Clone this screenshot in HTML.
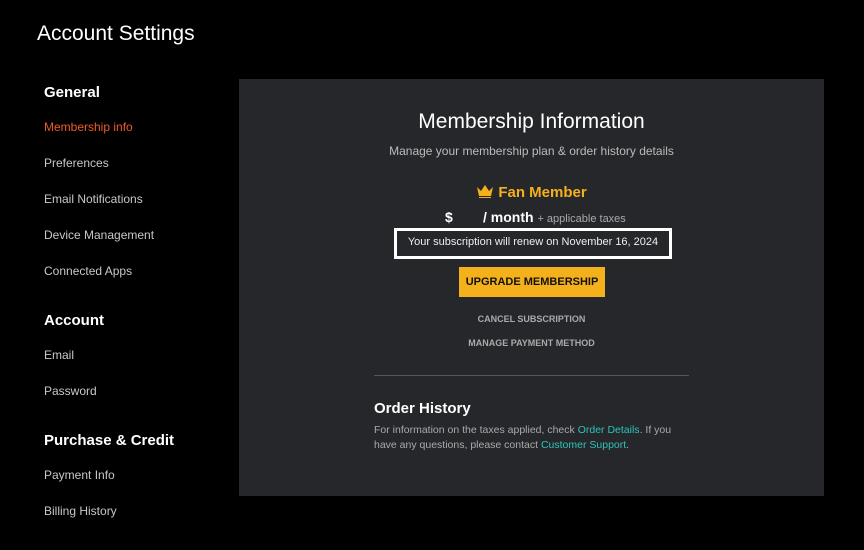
<!DOCTYPE html>
<html><head><meta charset="utf-8"><style>
*{margin:0;padding:0;box-sizing:border-box}
body{width:864px;height:550px;background:#000;font-family:"Liberation Sans",sans-serif;position:relative;overflow:hidden;color:#fff}
.a{position:absolute;white-space:nowrap}
.nav{font-size:12px;color:#c8c8c8}
.h{font-size:15px;font-weight:bold;color:#fff}
.panel{position:absolute;left:239px;top:79px;width:585px;height:417px;background:#26272b}
.c{position:absolute;left:0;width:585px;text-align:center}
</style></head><body>
<div class="a" style="left:37px;top:22px;font-size:21px">Account Settings</div>
<div class="a h" style="left:44px;top:84px">General</div>
<div class="a nav" style="left:44px;top:120px;color:#f05a28">Membership info</div>
<div class="a nav" style="left:44px;top:156px">Preferences</div>
<div class="a nav" style="left:44px;top:192px">Email Notifications</div>
<div class="a nav" style="left:44px;top:228px">Device Management</div>
<div class="a nav" style="left:44px;top:264px">Connected Apps</div>
<div class="a h" style="left:44px;top:312px">Account</div>
<div class="a nav" style="left:44px;top:348px">Email</div>
<div class="a nav" style="left:44px;top:384px">Password</div>
<div class="a h" style="left:44px;top:432px">Purchase &amp; Credit</div>
<div class="a nav" style="left:44px;top:468px">Payment Info</div>
<div class="a nav" style="left:44px;top:504px">Billing History</div>
<div class="panel">
<div class="c" style="top:31px;font-size:21px">Membership Information</div>
<div class="c" style="top:65px;font-size:12px;color:#bbb">Manage your membership plan &amp; order history details</div>
<div class="c" style="top:105px;font-size:15px;font-weight:bold;color:#f5b11c"><svg width="18" height="13" viewBox="0 0 18 13" style="vertical-align:-1px;margin-right:4px"><path d="M1 2L5 6L9 0L13 6L17 2L15 11H3Z M3 12H15V13H3Z" fill="#f5b11c"/></svg>Fan Member</div>
<div class="a" style="left:206px;top:130px;font-size:14px;font-weight:bold">$</div>
<div class="a" style="left:244px;top:130px;font-size:14px;font-weight:bold">/ month <span style="font-size:11px;font-weight:normal;color:#aaa">+ applicable taxes</span></div>
<div class="a" style="left:155px;top:149px;width:278px;height:31px;border:3px solid #fff;text-align:center;font-size:11px;line-height:22px;color:#eee">Your subscription will renew on November 16, 2024</div>
<div class="a" style="left:220px;top:188px;width:146px;height:30px;background:#f5b11c;color:#111;font-size:11px;font-weight:bold;text-align:center;line-height:30px">UPGRADE MEMBERSHIP</div>
<div class="c" style="top:235px;font-size:9px;font-weight:bold;color:#aaa">CANCEL SUBSCRIPTION</div>
<div class="c" style="top:259px;font-size:9px;font-weight:bold;color:#aaa">MANAGE PAYMENT METHOD</div>
<div class="a" style="left:135px;top:296px;width:315px;height:1px;background:#555"></div>
<div class="a" style="left:135px;top:321px;font-size:15px;font-weight:bold">Order History</div>
<div class="a" style="left:135px;top:344px;font-size:10.5px;color:#aaa;line-height:15px;white-space:normal;width:320px">For information on the taxes applied, check <span style="color:#2cc4b8">Order Details</span>. If you have any questions, please contact <span style="color:#2cc4b8">Customer Support</span>.</div>
</div>
</body></html>
